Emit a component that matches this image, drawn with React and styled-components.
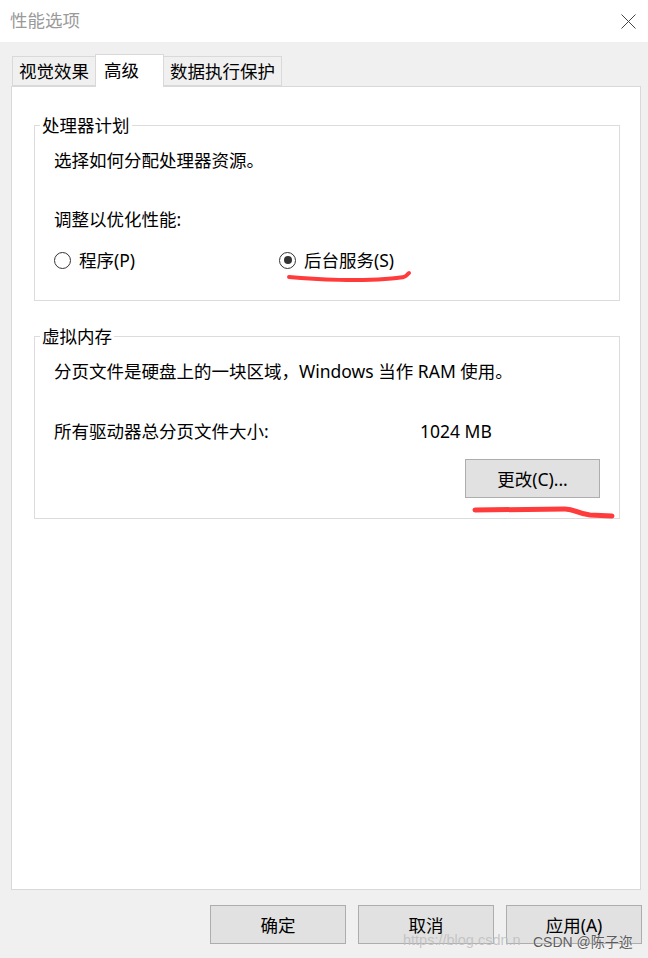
import React from "react";
import styled, { createGlobalStyle } from "styled-components";

const Global = createGlobalStyle`
  html, body { margin: 0; padding: 0; background: #f0f0f0; }
  body { font-family: "Noto Sans", "Noto Sans CJK SC", sans-serif; }
  * { box-sizing: border-box; }
`;

const Window = styled.div`
  position: relative;
  width: 648px;
  height: 958px;
  display: flex;
  flex-direction: column;
  background: #f0f0f0;
  overflow: hidden;
  color: #000;
  font-size: 17.5px;
`;

const TitleBar = styled.div`
  height: 42px;
  flex: none;
  background: #fff;
  display: flex;
  align-items: center;
  justify-content: space-between;
  padding: 0 12px 0 10px;
`;

const Title = styled.div`
  color: #9a9a9a;
  font-size: 17.5px;
  line-height: 20px;
  margin-top: -2px;
`;

const Body = styled.div`
  flex: 1;
  display: flex;
  flex-direction: column;
  padding: 12px 7px 14px 11px;
`;

const TabRow = styled.div`
  height: 32px;
  display: flex;
  align-items: flex-end;
  padding-left: 1px;
  position: relative;
  z-index: 1;
`;

const Tab = styled.div`
  height: ${(p) => (p.$active ? "33px" : "30px")};
  margin-bottom: ${(p) => (p.$active ? "-1px" : "0")};
  margin-left: -1px;
  min-width: ${(p) => p.$minW || 0}px;
  padding: ${(p) => (p.$active ? "0 8px 3px 8px" : "0 6px")};
  border: 1px solid #d9d9d9;
  border-bottom: ${(p) => (p.$active ? "none" : "1px solid #d9d9d9")};
  background: ${(p) => (p.$active ? "#fff" : "#f0f0f0")};
  display: flex;
  align-items: center;
  line-height: 20px;
  white-space: nowrap;
  position: relative;
  z-index: ${(p) => (p.$active ? 2 : 1)};
  &:first-child { margin-left: 0; }
`;

const Panel = styled.div`
  flex: 1;
  background: #fff;
  border: 1px solid #d9d9d9;
  padding: 0 20px 0 22px;
  display: flex;
  flex-direction: column;
`;

const Group = styled.fieldset`
  margin: ${(p) => p.$top}px 0 0 0;
  padding: 0 19px ${(p) => p.$bottom}px 19px;
  border: 1px solid #dcdcdc;
  min-width: 0;
  display: flex;
  flex-direction: column;
`;

const Legend = styled.legend`
  margin-left: -14px;
  padding: 0 2px;
  line-height: 20px;
`;

const Line = styled.div`
  line-height: 20px;
  margin-top: ${(p) => p.$top}px;
  white-space: nowrap;
`;

const RadioRow = styled.div`
  display: grid;
  grid-template-columns: 225px auto;
  margin-top: 21px;
  height: 20px;
`;

const RadioLabel = styled.label`
  display: inline-flex;
  align-items: center;
  gap: 8px;
  line-height: 20px;
  white-space: nowrap;
`;

const RadioCircle = styled.span`
  width: 17px;
  height: 17px;
  border-radius: 50%;
  border: 1px solid #333;
  background: #fff;
  display: grid;
  place-items: center;
  flex: none;
  &::after {
    content: "";
    width: 8px;
    height: 8px;
    border-radius: 50%;
    background: ${(p) => (p.$checked ? "#333" : "transparent")};
  }
`;

const SizeRow = styled.div`
  display: grid;
  grid-template-columns: 366px auto;
  line-height: 20px;
  margin-top: 40px;
  white-space: nowrap;
`;

const ButtonRow = styled.div`
  display: flex;
  justify-content: flex-end;
  gap: 12px;
  margin-top: ${(p) => p.$top}px;
  margin-right: ${(p) => p.$right || 0}px;
`;

const Button = styled.button`
  width: ${(p) => p.$w || 136}px;
  height: 39px;
  padding: 0;
  background: #e1e1e1;
  border: 1px solid #adadad;
  border-radius: 0;
  font-family: inherit;
  font-size: 17.5px;
  color: #000;
  line-height: 20px;
`;

const Annotations = styled.svg`
  position: absolute;
  left: 0;
  top: 0;
  pointer-events: none;
  z-index: 5;
`;

const Watermark = styled.div`
  position: absolute;
  left: 403px;
  top: 931px;
  font-family: "Liberation Sans", Arial, sans-serif;
  font-size: 14.5px;
  line-height: 18px;
  color: rgba(190, 190, 190, 0.85);
  pointer-events: none;
  z-index: 6;
  white-space: nowrap;
`;

const WatermarkName = styled.div`
  position: absolute;
  left: 533px;
  top: 933px;
  font-family: "Liberation Sans", "Noto Sans CJK SC", sans-serif;
  font-size: 14px;
  line-height: 18px;
  color: #5c5c5c;
  text-shadow: 0 0 1px #fff;
  pointer-events: none;
  z-index: 7;
  white-space: nowrap;
`;

function CloseIcon() {
  return (
    <svg width="15" height="15" viewBox="0 0 15 15">
      <path d="M0.5 0.5 L14.5 14.5 M14.5 0.5 L0.5 14.5" stroke="#444" strokeWidth="1" />
    </svg>
  );
}

export default function App() {
  return (
    <>
      <Global />
      <Window>
        <TitleBar>
          <Title>性能选项</Title>
          <CloseIcon />
        </TitleBar>
        <Body>
          <TabRow>
            <Tab>视觉效果</Tab>
            <Tab $active $minW={69}>高级</Tab>
            <Tab>数据执行保护</Tab>
          </TabRow>
          <Panel>
            <Group $top={28} $bottom={30}>
              <Legend>处理器计划</Legend>
              <Line $top={15}>选择如何分配处理器资源。</Line>
              <Line $top={39}>调整以优化性能:</Line>
              <RadioRow>
                <RadioLabel>
                  <RadioCircle />
                  程序(P)
                </RadioLabel>
                <RadioLabel>
                  <RadioCircle $checked />
                  后台服务(S)
                </RadioLabel>
              </RadioRow>
            </Group>
            <Group $top={25} $bottom={20}>
              <Legend>虚拟内存</Legend>
              <Line $top={15}>分页文件是硬盘上的一块区域，Windows 当作 RAM 使用。</Line>
              <SizeRow>
                <span>所有驱动器总分页文件大小:</span>
                <span>1024 MB</span>
              </SizeRow>
              <ButtonRow $top={18}>
                <Button $w={135}>更改(C)...</Button>
              </ButtonRow>
            </Group>
          </Panel>
          <ButtonRow $top={15} $right={-1}>
            <Button>确定</Button>
            <Button>取消</Button>
            <Button>应用(A)</Button>
          </ButtonRow>
        </Body>
        <Annotations width="648" height="958" viewBox="0 0 648 958">
          <path
            d="M289 277 C 320 280, 360 281, 385 279 S 404 277, 409 273"
            stroke="#ff3b3b"
            strokeWidth="4"
            fill="none"
            strokeLinecap="round"
          />
          <path
            d="M475 510 L 565 509 C 575 509, 578 514, 590 515 L 612 516"
            stroke="#ff3b3b"
            strokeWidth="5"
            fill="none"
            strokeLinecap="round"
          />
        </Annotations>
        <Watermark>https://blog.csdn.n</Watermark>
        <WatermarkName>CSDN @陈子迩</WatermarkName>
      </Window>
    </>
  );
}
